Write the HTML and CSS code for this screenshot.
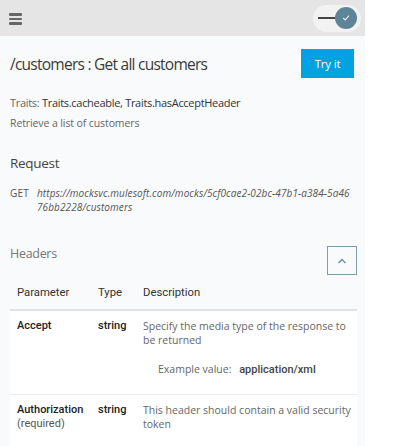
FILE: index.html
```html
<!DOCTYPE html>
<html>
<head>
<meta charset="utf-8">
<link rel="stylesheet" href="styles.css">
</head>
<body>
<div class="app">
  <header class="topbar">
    <div class="burger"><span></span><span></span><span></span></div>
    <div class="toggle">
      <span class="toggle-line"></span>
      <span class="toggle-knob">
        <svg width="10" height="10" viewBox="0 0 10 10"><path d="M2.5 5.3 L4.3 7 L7.6 3" fill="none" stroke="#fff" stroke-width="1.1" stroke-linecap="round"/></svg>
      </span>
    </div>
  </header>
  <main class="content">
    <div class="title-row">
      <h1 class="title">/customers : Get all customers</h1>
      <button class="try">Try it</button>
    </div>
    <p class="traits"><span class="muted">Traits:</span> Traits.cacheable, Traits.hasAcceptHeader</p>
    <p class="desc">Retrieve a list of customers</p>
    <h2 class="request">Request</h2>
    <div class="url-row">
      <span class="method">GET</span>
      <span class="url">https://mocksvc.mulesoft.com/mocks/5cf0cae2-02bc-47b1-a384-5a4676bb2228/customers</span>
    </div>
    <div class="headers-row">
      <h3 class="headers">Headers</h3>
      <button class="collapse">
        <svg width="10" height="6" viewBox="0 0 10 6"><path d="M1.5 5 L5 1.5 L8.5 5" fill="none" stroke="#6b8fa0" stroke-width="1.4"/></svg>
      </button>
    </div>
    <div class="table">
      <div class="thead">
        <div>Parameter</div><div>Type</div><div>Description</div>
      </div>
      <div class="trow">
        <div class="pname"><b>Accept</b></div>
        <div class="ptype">string</div>
        <div class="pdesc">
          <p>Specify the media type of the response to be returned</p>
          <p class="example">Example value: <b>application/xml</b></p>
        </div>
      </div>
      <div class="trow last">
        <div class="pname"><b>Authorization</b><br><span class="req">(required)</span></div>
        <div class="ptype">string</div>
        <div class="pdesc">
          <p>This header should contain a valid security token</p>
        </div>
      </div>
    </div>
  </main>
</div>
</body>
</html>
```

FILE: styles.css
```css
* { box-sizing: border-box; }
html, body { margin: 0; padding: 0; background: #fff; }
body { font-family: "Open Sans", "Liberation Sans", sans-serif; color: #333; }

.app {
  width: 365px;
  min-height: 446px;
  background: #f9fafb;
}

.topbar {
  height: 36px;
  background: #e5e5e5;
  display: flex;
  align-items: center;
  justify-content: space-between;
  padding: 0 4px 0 9px;
}
.burger {
  display: flex;
  flex-direction: column;
  gap: 2px;
  width: 13px;
  margin-top: 2px;
}
.burger span {
  display: block;
  height: 2.5px;
  background: #666;
  border-radius: 1px;
}
.toggle {
  width: 48px;
  height: 27px;
  border-radius: 14px;
  background: #f2f2f2;
  display: flex;
  align-items: center;
  padding: 0 4px 0 5px;
}
.toggle-line {
  width: 18px;
  height: 2px;
  background: #444;
}
.toggle-knob {
  width: 22px;
  height: 22px;
  border-radius: 50%;
  background: #5e8597;
  display: flex;
  align-items: center;
  justify-content: center;
  margin-left: -1px;
}

.content {
  padding: 0 8px 0 10px;
}
.title-row {
  display: flex;
  justify-content: space-between;
  align-items: center;
  padding-top: 13px;
}
.title {
  margin: 0;
  font-size: 15.5px;
  font-weight: 400;
  color: #3a3a3a;
  letter-spacing: -0.75px;
}
.try {
  width: 53px;
  height: 29px;
  margin-right: 3px;
  border: 0;
  background: #00a2df;
  color: #fff;
  font-family: "Open Sans", "Liberation Sans", sans-serif;
  font-size: 11.5px;
  letter-spacing: -0.2px;
  padding: 0;
}
.traits {
  margin: 17px 0 0;
  font-size: 11px;
  line-height: 16px;
  color: #333;
  letter-spacing: -0.3px;
}
.muted { color: #666; }
.desc {
  margin: 4px 0 0;
  font-size: 10.5px;
  line-height: 16px;
  color: #666;
  letter-spacing: -0.1px;
}
.request {
  margin: 22px 0 0;
  font-size: 13.5px;
  font-weight: 400;
  line-height: 20px;
  color: #444;
  letter-spacing: -0.3px;
}
.url-row {
  display: flex;
  margin-top: 13px;
  font-size: 10px;
  line-height: 14px;
  color: #555;
}
.method { width: 27px; flex: none; letter-spacing: 0.2px; }
.url {
  font-style: italic;
  word-break: break-all;
  width: 316px;
  flex: none;
  letter-spacing: 0.1px;
}

.headers-row {
  display: flex;
  justify-content: space-between;
  align-items: flex-start;
  margin-top: 31px;
}
.headers {
  margin: 0;
  font-size: 12.5px;
  font-weight: 400;
  line-height: 18px;
  color: #777;
  letter-spacing: -0.3px;
}
.collapse {
  width: 30px;
  height: 29px;
  margin-top: 1px;
  border: 1px solid #7d9ba9;
  background: transparent;
  padding: 0;
  display: flex;
  align-items: center;
  justify-content: center;
}

.table {
  margin-top: 1px;
  width: 347px;
  font-family: Roboto, "Open Sans", sans-serif;
}
.thead, .trow {
  display: grid;
  grid-template-columns: 81px 45px 1fr;
}
.thead {
  font-size: 11.3px;
  color: #333;
  line-height: 16px;
  padding: 9px 0 8px 7px;
  border-bottom: 2px solid #e2e2e2;
}
.trow {
  background: #fff;
  padding: 8px 0 11px 7px;
  border-bottom: 1px solid #ececec;
  font-size: 11px;
  line-height: 14px;
}
.trow.last { border-bottom: 0; min-height: 60px; padding-top: 8px; }
.pname b { font-weight: 500; color: #222; }
.req { color: #555; }
.ptype { font-weight: 500; color: #222; }
.pdesc {
  font-family: "Open Sans", "Liberation Sans", sans-serif;
  font-size: 10.5px;
  color: #666;
  padding-right: 6px;
}
.pdesc p { margin: 0; }
.pdesc .example {
  margin-top: 15px;
  padding-left: 15px;
  padding-bottom: 6px;
  color: #666;
}
.pdesc .example b {
  font-family: Roboto, sans-serif;
  font-weight: 500;
  font-size: 11px;
  color: #444;
  margin-left: 5px;
}
```
